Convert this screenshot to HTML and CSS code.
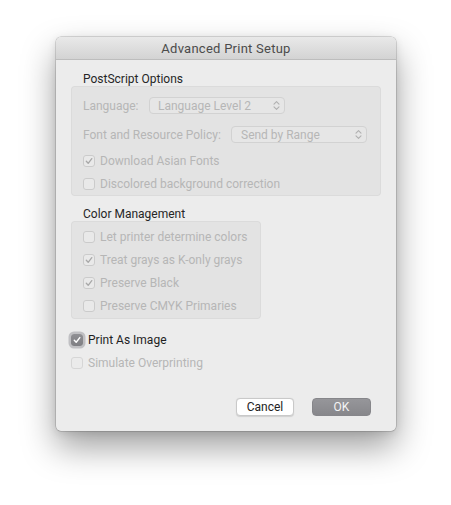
FILE: index.html
```html
<!DOCTYPE html>
<html>
<head>
<meta charset="utf-8">
<link rel="stylesheet" href="styles.css">
</head>
<body>
<div class="window">
  <div class="titlebar">Advanced Print Setup</div>
  <div class="content">
    <div class="section-label">PostScript Options</div>
    <div class="group group-ps">
      <div class="field-row row-lang">
        <span class="field-label label-lang">Language:</span>
        <div class="popup"><span>Language Level 2</span>
          <svg class="chev" viewBox="0 0 7 11" width="7" height="11"><path d="M1 4.2 L3.5 1.7 L6 4.2 M1 6.8 L3.5 9.3 L6 6.8" fill="none" stroke="#b0b0b0" stroke-width="1.1" stroke-linecap="round" stroke-linejoin="round"/></svg>
        </div>
      </div>
      <div class="field-row row-font">
        <span class="field-label label-font">Font and Resource Policy:</span>
        <div class="popup popup-font"><span>Send by Range</span>
          <svg class="chev" viewBox="0 0 7 11" width="7" height="11"><path d="M1 4.2 L3.5 1.7 L6 4.2 M1 6.8 L3.5 9.3 L6 6.8" fill="none" stroke="#b0b0b0" stroke-width="1.1" stroke-linecap="round" stroke-linejoin="round"/></svg>
        </div>
      </div>
      <div class="check-row row-first">
        <span class="cb checked"><svg viewBox="0 0 12 12" width="12" height="12"><path d="M3.3 6.3 L5.2 8.3 L8.8 3.6" fill="none" stroke="#a8a8a8" stroke-width="1.3" stroke-linecap="round" stroke-linejoin="round"/></svg></span>
        <span class="cb-text">Download Asian Fonts</span>
      </div>
      <div class="check-row">
        <span class="cb"></span>
        <span class="cb-text">Discolored background correction</span>
      </div>
    </div>

    <div class="section-label label-cm">Color Management</div>
    <div class="group group-cm">
      <div class="check-row">
        <span class="cb"></span>
        <span class="cb-text">Let printer determine colors</span>
      </div>
      <div class="check-row">
        <span class="cb checked"><svg viewBox="0 0 12 12" width="12" height="12"><path d="M3.3 6.3 L5.2 8.3 L8.8 3.6" fill="none" stroke="#a8a8a8" stroke-width="1.3" stroke-linecap="round" stroke-linejoin="round"/></svg></span>
        <span class="cb-text">Treat grays as K-only grays</span>
      </div>
      <div class="check-row">
        <span class="cb checked"><svg viewBox="0 0 12 12" width="12" height="12"><path d="M3.3 6.3 L5.2 8.3 L8.8 3.6" fill="none" stroke="#a8a8a8" stroke-width="1.3" stroke-linecap="round" stroke-linejoin="round"/></svg></span>
        <span class="cb-text">Preserve Black</span>
      </div>
      <div class="check-row">
        <span class="cb"></span>
        <span class="cb-text">Preserve CMYK Primaries</span>
      </div>
    </div>

    <div class="loose">
      <div class="check-row">
        <span class="cb active"><svg viewBox="0 0 12 12" width="12" height="12"><path d="M3.3 6.3 L5.2 8.3 L8.8 3.6" fill="none" stroke="#ffffff" stroke-width="1.4" stroke-linecap="round" stroke-linejoin="round"/></svg></span>
        <span class="cb-text enabled">Print As Image</span>
      </div>
      <div class="check-row">
        <span class="cb faint"></span>
        <span class="cb-text">Simulate Overprinting</span>
      </div>
    </div>

    <div class="buttons">
      <button class="btn btn-cancel">Cancel</button>
      <button class="btn btn-ok">OK</button>
    </div>
  </div>
</div>
</body>
</html>
```

FILE: styles.css
```css
html, body {
  margin: 0;
  padding: 0;
  background: #ffffff;
}

body {
  padding: 37px 0 0 56px;
  min-height: 505px;
  box-sizing: border-box;
  font-family: "Roboto", "Noto Sans", sans-serif;
  font-size: 12px;
  color: #262626;
  white-space: nowrap;
}

.window {
  width: 340px;
  background: #ececec;
  border-radius: 5px;
  box-shadow: 0 0 0 0.5px rgba(0, 0, 0, 0.25), 0 16px 34px rgba(0, 0, 0, 0.38), 0 2px 8px rgba(0, 0, 0, 0.1);
  overflow: hidden;
}

.titlebar {
  height: 22px;
  line-height: 24px;
  text-align: center;
  font-size: 13px;
  letter-spacing: 0.25px;
  color: #4b4b4b;
  background: linear-gradient(#e9e9e9, #d3d3d3);
  border-bottom: 1px solid #bdbdbd;
  overflow: hidden;
}

.content {
  padding: 11px 15px 15px 15px;
}

.section-label {
  height: 15px;
  line-height: 17px;
  padding-left: 12px;
  color: #262626;
}

.label-cm {
  margin-top: 10px;
}

.group {
  background: #e3e3e3;
  border-radius: 4px;
  box-shadow: inset 0 0 0 1px rgba(0, 0, 0, 0.035);
  box-sizing: border-box;
}

.group-ps {
  height: 110px;
  padding: 11px 12px 1px 12px;
}

.group-cm {
  width: 190px;
  height: 98px;
  padding: 4px 12px 2px 12px;
}

.field-row {
  display: flex;
  align-items: center;
  height: 17px;
}

.row-font {
  margin-top: 12px;
}

.row-first {
  margin-top: 6px;
}

.field-label {
  color: #b6b6b6;
  flex: none;
}

.label-lang {
  width: 66px;
}

.label-font {
  width: 148px;
}

.popup {
  box-sizing: border-box;
  height: 17px;
  width: 136px;
  flex: none;
  display: flex;
  align-items: center;
  justify-content: space-between;
  padding: 0 4px 0 8px;
  background: #e6e6e6;
  border: 1px solid #d2d2d2;
  border-radius: 4px;
  color: #b6b6b6;
}

.popup-font {
  padding-left: 9px;
}

.chev {
  display: block;
}

.check-row {
  display: flex;
  align-items: center;
  height: 23px;
}

.cb {
  box-sizing: border-box;
  width: 12px;
  height: 12px;
  border: 1px solid #cbcbcb;
  border-radius: 3px;
  background: #e9e9e9;
  margin-right: 5px;
  flex: none;
  position: relative;
}

.cb svg {
  position: absolute;
  left: -1px;
  top: -1px;
}

.cb.faint {
  border-color: #d6d6d6;
  background: #ebebeb;
}

.cb.active {
  border: none;
  background: linear-gradient(#909094, #7f7f83);
  box-shadow: 0 0 0 2.5px rgba(140, 140, 146, 0.45);
}

.cb.active svg {
  left: 0;
  top: 0;
}

.cb-text {
  color: #b6b6b6;
}

.cb-text.enabled {
  color: #1e1e1e;
}

.loose {
  margin-top: 9px;
}

.buttons {
  margin-top: 24px;
  display: flex;
  justify-content: flex-end;
  gap: 18px;
  padding-right: 10px;
}

.btn {
  box-sizing: border-box;
  height: 18px;
  margin: 0;
  padding: 0;
  font-family: "Roboto", "Noto Sans", sans-serif;
  font-size: 12px;
  border-radius: 4px;
  line-height: 16px;
}

.btn-cancel {
  width: 58px;
  background: #ffffff;
  color: #222222;
  border: 1px solid #c9c9c9;
  box-shadow: 0 0.5px 1px rgba(0, 0, 0, 0.12);
}

.btn-ok {
  width: 59px;
  background: linear-gradient(#96969a, #87878b);
  color: #f4f4f4;
  border: 1px solid #86868a;
}
```
